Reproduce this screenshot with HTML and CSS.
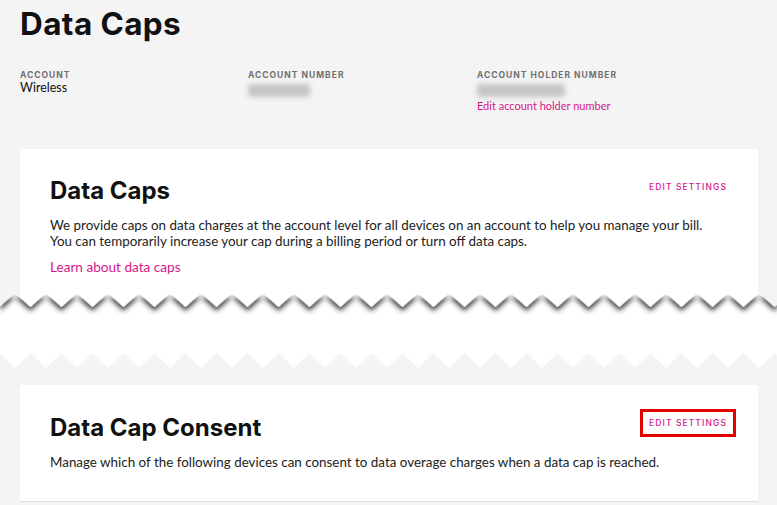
FILE: index.html
```html
<!DOCTYPE html>
<html lang="en">
<head>
<meta charset="utf-8">
<title>Data Caps</title>
<link rel="stylesheet" href="styles.css">
</head>
<body>
<div class="page">
  <h1 class="title">Data Caps</h1>
  <div class="info">
    <div class="info-col">
      <div class="info-label">ACCOUNT</div>
      <div class="info-value">Wireless</div>
    </div>
    <div class="info-col">
      <div class="info-label">ACCOUNT NUMBER</div>
      <div class="blur blur-a"></div>
    </div>
    <div class="info-col">
      <div class="info-label">ACCOUNT HOLDER NUMBER</div>
      <div class="blur blur-b"></div>
      <a class="small-link" href="#">Edit account holder number</a>
    </div>
  </div>

  <section class="card card-top">
    <div class="card-head">
      <h2 class="card-title">Data Caps</h2>
      <a class="edit" href="#">EDIT SETTINGS</a>
    </div>
    <p class="card-text">We provide caps on data charges at the account level for all devices on an account to help you manage your bill.<br>You can temporarily increase your cap during a billing period or turn off data caps.</p>
    <a class="learn" href="#">Learn about data caps</a>
  </section>
</div>

<svg class="tear" width="777" height="92" viewBox="0 0 777 92" aria-hidden="true">
  <defs>
    <pattern id="pTop" patternUnits="userSpaceOnUse" x="-0.5" y="0" width="31" height="14">
      <polygon points="0,0 31,0 31,14 15.5,0 0,14" fill="#ffffff"/>
    </pattern>
    <pattern id="pTopG" patternUnits="userSpaceOnUse" x="-0.5" y="0" width="31" height="14">
      <polygon points="0,0 31,0 31,14 15.5,0 0,14" fill="#f4f4f4"/>
    </pattern>
    <pattern id="pBot" patternUnits="userSpaceOnUse" x="-0.5" y="60" width="31" height="15">
      <polygon points="0,0 31,0 15.5,15" fill="#ffffff"/>
    </pattern>
    <filter id="sh" x="-5%" y="-50%" width="110%" height="250%">
      <feDropShadow dx="0" dy="4" stdDeviation="2.6" flood-color="#2e2e2e" flood-opacity="0.9"/>
    </filter>
  </defs>
  <rect x="0" y="0" width="777" height="60" fill="#ffffff"/>
  <rect x="0" y="60" width="777" height="15" fill="url(#pBot)"/>
  <g filter="url(#sh)">
    <rect x="0" y="0" width="20" height="14" fill="url(#pTopG)"/>
    <rect x="20" y="0" width="738" height="14" fill="url(#pTop)"/>
    <rect x="758" y="0" width="19" height="14" fill="url(#pTopG)"/>
  </g>
</svg>

<div class="page">
  <section class="card card-bottom">
    <div class="card-head">
      <h2 class="card-title">Data Cap Consent</h2>
      <a class="edit edit-boxed" href="#">EDIT SETTINGS</a>
    </div>
    <p class="card-text">Manage which of the following devices can consent to data overage charges when a data cap is reached.</p>
  </section>
</div>
</body>
</html>
```

FILE: styles.css
```css
html, body {
  margin: 0;
  padding: 0;
  background: #f4f4f4;
  overflow: hidden;
}
body {
  width: 777px;
  height: 505px;
  font-family: Lato, "Open Sans", sans-serif;
  color: #111;
}
.page {
  padding: 0 19px 0 20px;
}
.title {
  margin: 0;
  padding-top: 4px;
  font-family: Inter, "Open Sans", sans-serif;
  font-weight: 700;
  font-size: 31.5px;
  line-height: 40px;
  letter-spacing: 0.4px;
  color: #111;
}
.info {
  display: grid;
  grid-template-columns: 228px 229px 1fr;
  margin-top: 26px;
}
.info-col {
  display: flex;
  flex-direction: column;
  align-items: flex-start;
}
.info-label {
  font-family: Inter, sans-serif;
  font-weight: 700;
  font-size: 8.5px;
  line-height: 11px;
  letter-spacing: 1px;
  color: #6f6f6f;
}
.info-value {
  font-size: 12.5px;
  line-height: 14px;
  color: #111;
}
.blur {
  background: #c6c6c6;
  filter: blur(2.5px);
  border-radius: 3px;
  height: 13px;
  margin-top: 3px;
}
.blur-a { width: 62px; }
.blur-b { width: 88px; }
.small-link {
  margin-top: 2px;
  font-size: 11px;
  line-height: 13px;
  color: #d6168b;
  text-decoration: none;
}
.card {
  background: #fff;
  padding: 0 22px 0 30px;
}
.card-top {
  margin-top: 37px;
  padding-top: 24px;
  padding-bottom: 18px;
}
.tear {
  display: block;
}
.card-bottom {
  padding-top: 24px;
  padding-bottom: 31px;
  border-bottom: 1px solid #dcdcdc;
}
.card-head {
  display: flex;
  justify-content: space-between;
  align-items: flex-start;
}
.card-title {
  margin: 4px 0 0 0;
  font-family: Inter, sans-serif;
  font-weight: 700;
  font-size: 24px;
  line-height: 28px;
  color: #111;
}
.card-bottom .card-title {
  margin-top: 5px;
}
.edit {
  display: block;
  border: 3px solid transparent;
  padding: 4px 6px;
  font-family: Inter, sans-serif;
  font-weight: 500;
  font-size: 8.5px;
  line-height: 14px;
  letter-spacing: 1.1px;
  color: #d6168b;
  text-decoration: none;
}
.edit-boxed {
  border-color: #e00000;
}
.card-text {
  margin: 12px 0 0 0;
  font-size: 13.4px;
  line-height: 16px;
  color: #222;
}
.learn {
  display: block;
  margin-top: 10px;
  font-size: 13.6px;
  line-height: 16px;
  color: #d6168b;
  text-decoration: none;
}
```
